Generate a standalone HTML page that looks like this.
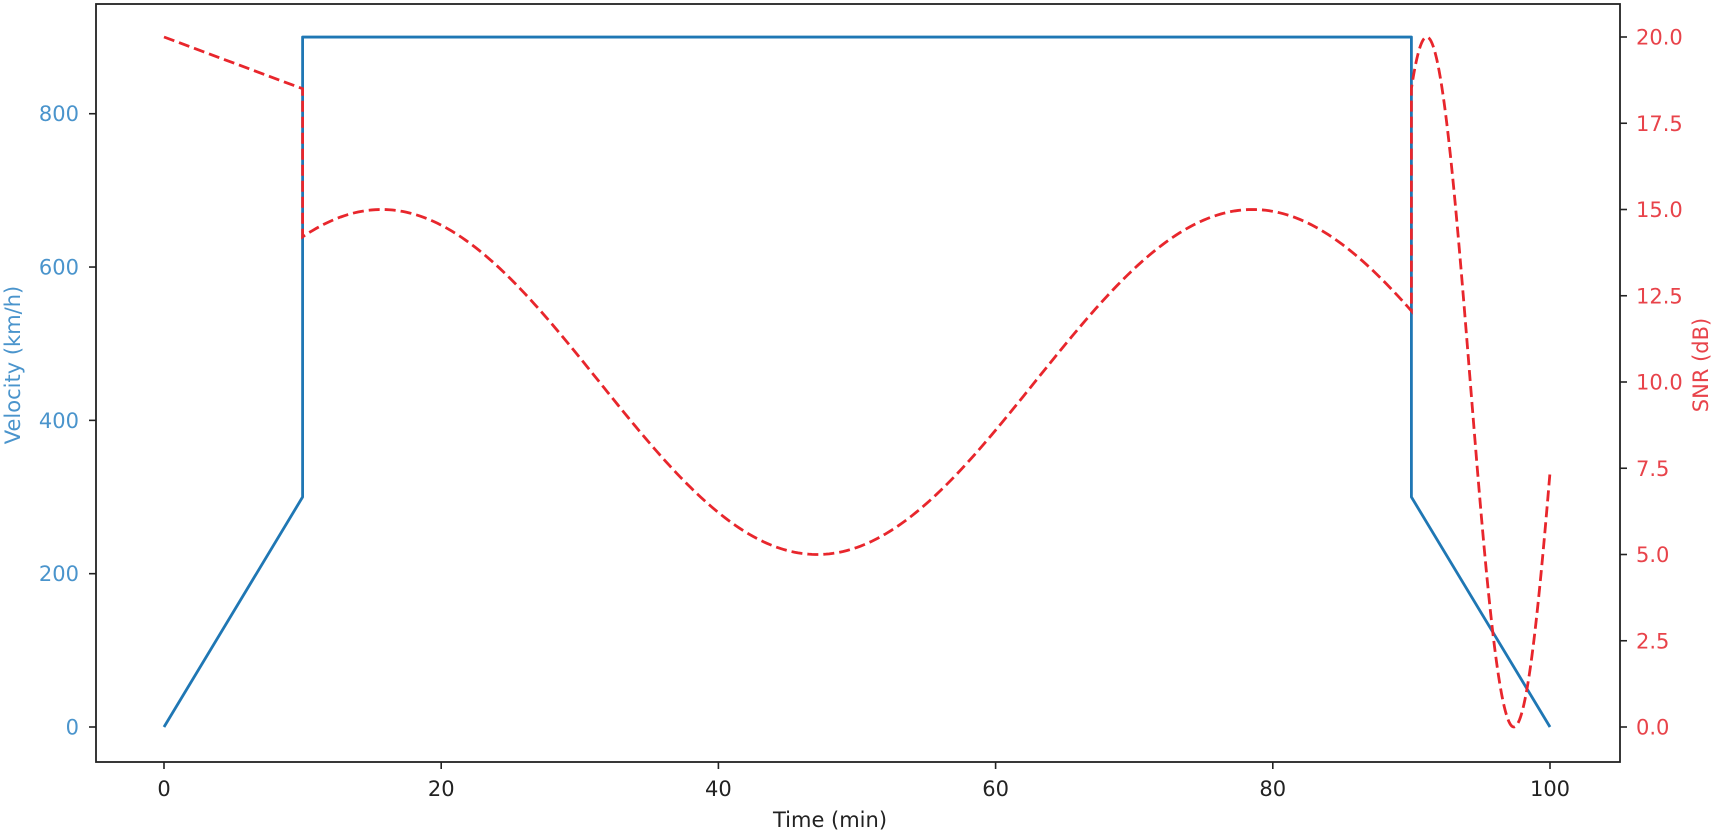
<!DOCTYPE html>
<html><head><meta charset="utf-8"><style>
html,body{margin:0;padding:0;background:#fff}
svg{display:block}
text{font-family:"DejaVu Sans","Liberation Sans",sans-serif;font-size:21px}
</style></head><body>
<svg id="s" width="1716" height="834" viewBox="0 0 1716 834" xmlns="http://www.w3.org/2000/svg">
<rect width="1716" height="834" fill="#fff"/>
<g id="g"></g>
<path id="v" fill="none" stroke="#1f77b4" stroke-width="2.8" stroke-linejoin="round"/>
<path id="r" fill="none" stroke="#e8262c" stroke-width="2.8" stroke-dasharray="11,5"/>
<rect x="96" y="4" width="1524" height="758" fill="none" stroke="#222" stroke-width="1.8"/>
<text x="830" y="827" text-anchor="middle" fill="#222">Time (min)</text>
<text transform="translate(20,365) rotate(-90)" text-anchor="middle" fill="#4a94cc">Velocity (km/h)</text>
<text transform="translate(1708,365) rotate(-90)" text-anchor="middle" fill="#e8434a">SNR (dB)</text>
</svg>
<script>
var X=t=>164+13.86*t, YV=v=>727-v*0.7666, YS=s=>727-s*34.5;
var g=document.getElementById('g'),h='';
for(var t=0;t<=100;t+=20){h+='<line x1="'+X(t)+'" y1="762" x2="'+X(t)+'" y2="769" stroke="#222" stroke-width="1.6"/><text x="'+X(t)+'" y="796" text-anchor="middle" fill="#222">'+t+'</text>';}
for(var v=0;v<=800;v+=200){h+='<line x1="89" y1="'+YV(v)+'" x2="96" y2="'+YV(v)+'" stroke="#222" stroke-width="1.6"/><text x="79" y="'+(YV(v)+7.5)+'" text-anchor="end" fill="#4a94cc">'+v+'</text>';}
for(var s=0;s<=20;s+=2.5){h+='<line x1="1620" y1="'+YS(s)+'" x2="1627" y2="'+YS(s)+'" stroke="#222" stroke-width="1.6"/><text x="1636" y="'+(YS(s)+7.5)+'" fill="#e8434a">'+s.toFixed(1)+'</text>';}
g.innerHTML=h;
document.getElementById('v').setAttribute('d','M'+X(0)+','+YV(0)+'L'+X(10)+','+YV(300)+'L'+X(10)+','+YV(900)+'L'+X(90)+','+YV(900)+'L'+X(90)+','+YV(300)+'L'+X(100)+','+YV(0));
var d='M'+X(0)+','+YS(20)+'L'+X(10)+','+YS(18.5);
for(var t=10;t<=90.0001;t+=0.25){d+='L'+X(t).toFixed(2)+','+YS(10+5*Math.sin(t/10)).toFixed(2);}
for(var t=90;t<=100.0001;t+=0.05){d+='L'+X(t).toFixed(2)+','+YS(10+10*Math.sin(t/2)).toFixed(2);}
document.getElementById('r').setAttribute('d',d);
</script>
</body></html>
